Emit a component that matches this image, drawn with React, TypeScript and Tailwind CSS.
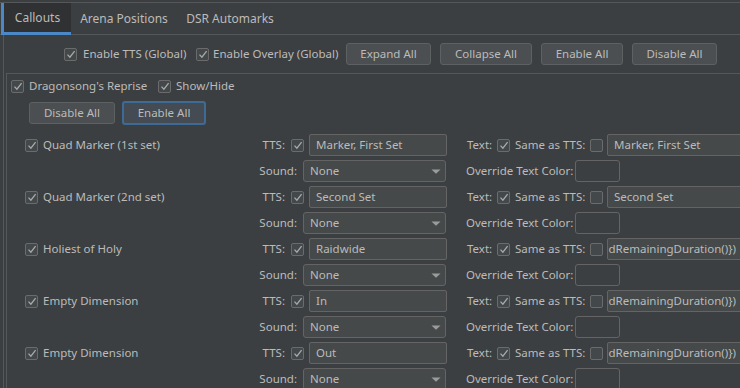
import React from "react";

const Check = ({ checked = true }: { checked?: boolean }) => (
  <span className="w-[13px] h-[13px] shrink-0 rounded-[2px] border border-[#6b6b6b] bg-[#43494a] flex items-center justify-center">
    {checked && (
      <svg width="10" height="9" viewBox="0 0 10 9">
        <path d="M1.5 4.6 L3.9 7.2 L8.6 1.2" fill="none" stroke="#a9a9a9" strokeWidth="1.3" />
      </svg>
    )}
  </span>
);

const Btn = ({ label, w, focused = false }: { label: string; w: string; focused?: boolean }) => (
  <div
    className={
      focused
        ? `${w} h-[24px] flex items-center justify-center rounded-[3px] border-2 border-[#3e6a96] bg-[#444b52]`
        : `${w} h-[22px] flex items-center justify-center rounded-[3px] border border-[#5e6162] bg-[#4b4f51]`
    }
  >
    {label}
  </div>
);

const Input = ({ text, w }: { text: string; w: string }) => (
  <div className={`${w} h-[22px] shrink-0 flex items-center pl-[6px] rounded-[2px] border border-[#646464] bg-[#45494a] overflow-hidden whitespace-nowrap`}>
    {text}
  </div>
);

const RightInput = ({ text, scrolled }: { text: string; scrolled: boolean }) => (
  <div className="w-[140px] h-[22px] shrink-0 flex items-center rounded-[2px] border border-[#646464] bg-[#45494a] overflow-hidden whitespace-nowrap">
    {scrolled ? (
      <div className="w-full flex justify-end pr-[10px]">{text}</div>
    ) : (
      <div className="pl-[6px]">{text}</div>
    )}
  </div>
);

const Select = () => (
  <div className="w-[143px] h-[22px] shrink-0 flex items-center justify-between pl-[6px] pr-[4px] rounded-[3px] border border-[#646464] bg-[#45494a]">
    <span>None</span>
    <svg width="10" height="5" viewBox="0 0 10 5">
      <path d="M0.5 0.5 L9.5 0.5 L5 4.8 Z" fill="#9b9b9b" />
    </svg>
  </div>
);

const items = [
  { name: "Quad Marker (1st set)", tts: "Marker, First Set", text: "Marker, First Set", scrolled: false },
  { name: "Quad Marker (2nd set)", tts: "Second Set", text: "Second Set", scrolled: false },
  { name: "Holiest of Holy", tts: "Raidwide", text: "dRemainingDuration()})", scrolled: true },
  { name: "Empty Dimension", tts: "In", text: "dRemainingDuration()})", scrolled: true },
  { name: "Empty Dimension", tts: "Out", text: "dRemainingDuration()})", scrolled: true },
];

export default function App() {
  return (
    <div
      className="w-[740px] h-[388px] overflow-hidden bg-[#3c3f41] text-[#bbbbbb] text-[11.5px] flex flex-col pt-[2px]"
      style={{ fontFamily: '"Noto Sans", "Open Sans", sans-serif' }}
    >
      <div className="border-t border-[#555759] flex flex-col flex-1">
        {/* tab bar */}
        <div className="h-[32px] shrink-0 flex border-b border-[#555759] pl-[1px] text-[12px]">
          <div className="w-[3px] bg-[#4a88c7] -mb-[1px]" />
          <div className="w-[67px] flex items-center justify-center bg-[#2f3133] border-b-[3px] border-[#4a88c7] -mb-[1px]">
            Callouts
          </div>
          <div className="w-[106px] flex items-center justify-center">Arena Positions</div>
          <div className="w-[106px] flex items-center justify-center">DSR Automarks</div>
        </div>
        {/* content */}
        <div className="flex-1 ml-[3px] border-l border-[#555759] flex flex-col">
          <div className="h-[38px] shrink-0 flex items-center pl-[60px]">
            <Check />
            <span className="ml-[6px] w-[113px]">Enable TTS (Global)</span>
            <Check />
            <span className="ml-[4px] w-[133px]">Enable Overlay (Global)</span>
            <div className="flex gap-[9px]">
              <Btn label="Expand All" w="w-[85px]" />
              <Btn label="Collapse All" w="w-[92px]" />
              <Btn label="Enable All" w="w-[82px]" />
              <Btn label="Disable All" w="w-[85px]" />
            </div>
          </div>
          <div className="flex-1 border-t border-[#555759] ml-[2px] border-l flex flex-col">
            <div className="mt-[1px] h-[22px] shrink-0 flex items-center pl-[4px]">
              <Check />
              <span className="ml-[5px] w-[129px]">Dragonsong's Reprise</span>
              <Check />
              <span className="ml-[5px]">Show/Hide</span>
            </div>
            <div className="mt-[4px] flex items-center gap-[7px] pl-[22px]">
              <Btn label="Disable All" w="w-[86px]" />
              <Btn label="Enable All" w="w-[84px]" focused />
            </div>
            <div className="mt-[9px] flex flex-col gap-[4px] pl-[18px]">
              {items.map((it, i) => (
                <React.Fragment key={i}>
                  <div className="h-[22px] flex items-center">
                    <div className="w-[233px] shrink-0 flex items-center gap-[5px]">
                      <Check />
                      <span>{it.name}</span>
                    </div>
                    <div className="w-[46px] shrink-0 flex items-center justify-end gap-[6px]">
                      <span>TTS:</span>
                      <Check />
                    </div>
                    <div className="ml-[5px]">
                      <Input text={it.tts} w="w-[138px]" />
                    </div>
                    <span className="ml-[20px] w-[30px] shrink-0">Text:</span>
                    <Check />
                    <span className="ml-[5px] w-[75px] shrink-0 whitespace-nowrap">Same as TTS:</span>
                    <Check checked={false} />
                    <div className="ml-[4px]">
                      <RightInput text={it.text} scrolled={it.scrolled} />
                    </div>
                  </div>
                  <div className="h-[22px] flex items-center">
                    <div className="w-[233px] shrink-0" />
                    <span className="w-[39px] shrink-0 text-right">Sound:</span>
                    <div className="ml-[6px]">
                      <Select />
                    </div>
                    <span className="ml-[20px] w-[109px] shrink-0 whitespace-nowrap">Override Text Color:</span>
                    <div className="w-[45px] h-[22px] shrink-0 rounded-[3px] border border-[#646464]" />
                  </div>
                </React.Fragment>
              ))}
            </div>
          </div>
        </div>
      </div>
    </div>
  );
}
